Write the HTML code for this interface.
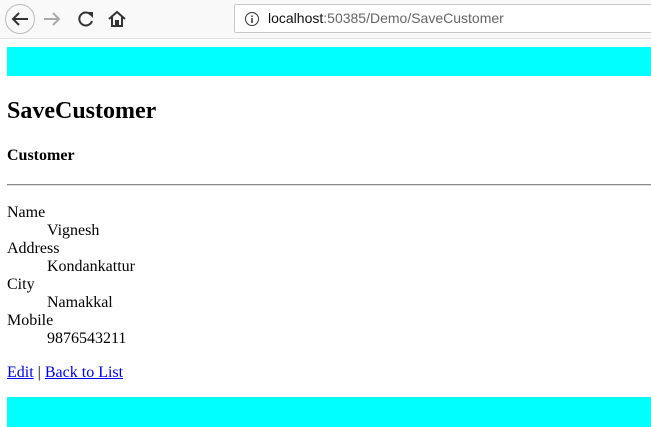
<!DOCTYPE html>
<html><head><style>
body{margin:0;width:651px;height:427px;overflow:hidden;background:#fff;font-family:"Liberation Serif",serif;font-size:16px;position:relative}
.tb{position:absolute;left:0;top:0;width:651px;height:38px;background:#f9f9fa;border-bottom:1px solid #e0e0e0}
.url{position:absolute;left:234px;top:4px;width:430px;height:27px;background:#fff;border:1px solid #c8c8c8;border-radius:2px;font-family:"Liberation Sans",sans-serif;font-size:14px;line-height:27px}
.a{position:absolute;white-space:nowrap}
.cy{position:absolute;left:7px;width:644px;background:#0ff}
a{color:#00e}
</style></head><body>
<div class="tb">
<svg class="a" style="left:4px;top:3px" width="32" height="32"><circle cx="16" cy="16" r="14.5" fill="#f9f9fa" stroke="#bbb"/><path d="M24 16H9M15 10l-6 6 6 6" stroke="#333" stroke-width="2" fill="none"/></svg>
<svg class="a" style="left:42px;top:9px" width="20" height="20"><path d="M2 10h15M11 4l6 6-6 6" stroke="#aaa" stroke-width="2" fill="none"/></svg>
<svg class="a" style="left:76px;top:9px" width="20" height="20"><path d="M15 6A6.5 6.5 0 1 0 16 12" stroke="#333" stroke-width="2" fill="none"/><path d="M11 3h6v6z" fill="#333"/></svg>
<svg class="a" style="left:107px;top:9px" width="20" height="20"><path d="M2 10L10 3l8 7M5 8v9h4v-5h2v5h4V8" stroke="#333" stroke-width="2" fill="none"/></svg>
<div class="url"><svg class="a" style="left:9px;top:6px" width="16" height="16"><circle cx="8" cy="8" r="6.5" stroke="#333" fill="none"/><path d="M8 7v5M8 4.5v1.5" stroke="#333" stroke-width="1.5"/></svg><span class="a" style="left:33px;top:0"><span style="color:#111">localhost</span><span style="color:#666">:50385/Demo/SaveCustomer</span></span></div>
</div>
<div class="cy" style="top:47px;height:29px"></div>
<div class="a" style="left:7px;top:98px;font-size:24px;font-weight:bold">SaveCustomer</div>
<div class="a" style="left:7px;top:147px;font-weight:bold">Customer</div>
<div class="a" style="left:7px;top:184px;width:644px;height:0;border-top:1px solid #888;border-bottom:1px solid #ddd"></div>
<div class="a" style="left:7px;top:204px">Name</div>
<div class="a" style="left:47px;top:222px">Vignesh</div>
<div class="a" style="left:7px;top:240px">Address</div>
<div class="a" style="left:47px;top:258px">Kondankattur</div>
<div class="a" style="left:7px;top:276px">City</div>
<div class="a" style="left:47px;top:294px">Namakkal</div>
<div class="a" style="left:7px;top:312px">Mobile</div>
<div class="a" style="left:47px;top:330px">9876543211</div>
<div class="a" style="left:7px;top:364px"><a href="#">Edit</a> | <a href="#">Back to List</a></div>
<div class="cy" style="top:397px;height:30px"></div>
</body></html>
